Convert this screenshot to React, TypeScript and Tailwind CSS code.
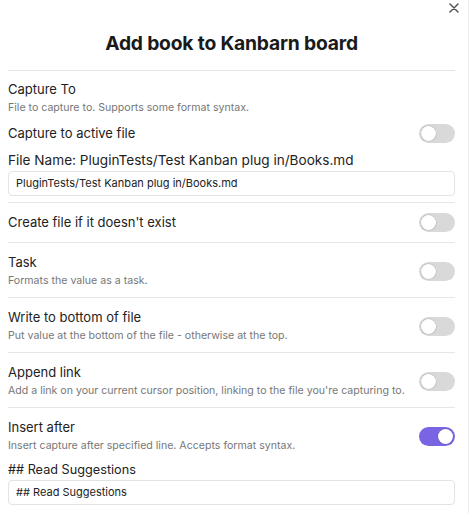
import React from "react";

function Toggle({ on }: { on: boolean }) {
  return (
    <div
      className={
        on
          ? "flex h-[19px] w-[36px] shrink-0 items-center justify-end rounded-full bg-[#7b64e4] px-[2px]"
          : "flex h-[19px] w-[36px] shrink-0 items-center justify-start rounded-full bg-[#d9d9d9] px-[2px]"
      }
    >
      <div className="h-[15px] w-[15px] rounded-full bg-white shadow-[0_0_0_0.5px_rgba(0,0,0,0.18)]" />
    </div>
  );
}

function Setting({ name, desc, on, last }: { name: string; desc?: string; on: boolean; last?: boolean }) {
  return (
    <div
      className={
        "flex items-center justify-between border-t border-[#e6e6e6] " +
        (desc ? (last ? "pt-[10px] pb-[6px]" : "pt-[10px] pb-[8px]") : "py-[10px]")
      }
    >
      <div className="flex flex-col">
        <div className="text-[13px] leading-[19px] text-[#222]">{name}</div>
        {desc && <div className="text-[10.6px] leading-[17px] text-[#777]">{desc}</div>}
      </div>
      <Toggle on={on} />
    </div>
  );
}

function TextField({ label, value, size }: { label: string; value: string; size: string }) {
  return (
    <div className="flex flex-col pb-[6px]">
      <div className={size + " leading-[19px] text-[#222]"}>{label}</div>
      <div className="mt-[1px] flex h-[25px] items-center rounded-[4px] border border-[#e3e3e3] bg-white px-[7px] text-[11px] text-[#222]">
        {value}
      </div>
    </div>
  );
}

export default function App() {
  return (
    <div
      className="relative h-[513px] w-[474px] overflow-hidden bg-white"
      style={{ fontFamily: "Inter, 'Noto Sans', sans-serif" }}
    >
      <div className="flex h-full w-[469px] flex-col border-r border-[#ececec] pl-[8px] pr-[13px]">
        <div className="h-[16px]" />
        <h1 className="mt-[14px] text-center text-[19.3px] font-bold leading-[26px] tracking-[-0.2px] text-[#1a1a1a]">
          Add book to Kanbarn board
        </h1>
        <div className="mt-[14px] border-t border-[#e3e3e3]" />
        <div className="pt-[9px]">
          <div className="text-[13px] leading-[19px] text-[#222]">Capture To</div>
          <div className="text-[10.6px] leading-[17px] text-[#777]">File to capture to. Supports some format syntax.</div>
        </div>
        <div className="flex items-center justify-between py-[8px]">
          <div className="text-[13px] leading-[19px] text-[#222]">Capture to active file</div>
          <Toggle on={false} />
        </div>
        <TextField
          size="text-[13.6px]"
          label="File Name: PluginTests/Test Kanban plug in/Books.md"
          value="PluginTests/Test Kanban plug in/Books.md"
        />
        <Setting name="Create file if it doesn't exist" on={false} />
        <Setting name="Task" desc="Formats the value as a task." on={false} />
        <Setting name="Write to bottom of file" desc="Put value at the bottom of the file - otherwise at the top." on={false} />
        <Setting
          name="Append link"
          desc="Add a link on your current cursor position, linking to the file you're capturing to."
          on={false}
        />
        <Setting name="Insert after" desc="Insert capture after specified line. Accepts format syntax." on={true} last />
        <TextField size="text-[12.7px]" label="## Read Suggestions" value="## Read Suggestions" />
      </div>

      {/* close button */}
      <button className="absolute left-[449px] top-[3px] flex h-[10px] w-[10px] items-center justify-center">
        <svg width="10" height="10" viewBox="0 0 10 10" fill="none" stroke="#555" strokeWidth="1.5" strokeLinecap="round">
          <path d="M1 1L9 9M9 1L1 9" />
        </svg>
      </button>
    </div>
  );
}
